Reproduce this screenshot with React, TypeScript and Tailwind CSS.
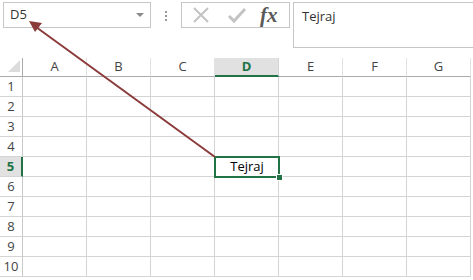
import React from 'react';

const cols = ['A', 'B', 'C', 'D', 'E', 'F', 'G'];
const rows = [1, 2, 3, 4, 5, 6, 7, 8, 9, 10];

export default function App() {
  return (
    <div className="relative w-[473px] h-[280px] overflow-hidden bg-white font-['Open_Sans',sans-serif] text-[12px]">
      {/* formula bar area */}
      <div className="flex items-start h-[58px] pt-[2px] pl-[3px]">
        <div className="flex items-center justify-between w-[148px] h-[26px] border border-[#c6c6c6] pl-[6px] pr-[6px]">
          <span className="text-[13px] text-[#333]">D5</span>
          <span className="w-0 h-0 border-l-[4px] border-r-[4px] border-t-[4px] border-l-transparent border-r-transparent border-t-[#8a8a8a]" />
        </div>
        <div className="flex flex-col gap-[2px] ml-[14px] mt-[9px]">
          <span className="w-[2px] h-[2px] bg-[#9a9a9a]" />
          <span className="w-[2px] h-[2px] bg-[#9a9a9a]" />
          <span className="w-[2px] h-[2px] bg-[#9a9a9a]" />
        </div>
        <div className="flex items-center ml-[14px] w-[109px] h-[26px] border border-[#c6c6c6]">
          <svg width="18" height="18" viewBox="0 0 18 18" className="ml-[10px]">
            <path d="M2 2 L16 16 M16 2 L2 16" stroke="#c3c3c3" strokeWidth="2" fill="none" />
          </svg>
          <svg width="20" height="18" viewBox="0 0 20 18" className="ml-[17px]">
            <path d="M2 10 L7 15 L18 3" stroke="#c3c3c3" strokeWidth="3" fill="none" />
          </svg>
          <span className="ml-[13px] font-['Liberation_Serif',serif] italic font-bold text-[21px] leading-none text-[#5a5a5a]">
            fx
          </span>
        </div>
        <div className="ml-[3px] flex-1 h-[46px] border border-r-0 border-[#c6c6c6] pl-[8px] pt-[4px]">
          <span className="text-[13px] text-[#333]">Tejraj</span>
        </div>
      </div>

      {/* sheet */}
      <div className="grid grid-cols-[23px_repeat(7,64px)] grid-rows-[19px_repeat(10,20px)]">
        <div className="relative border-r border-b border-[#ababab]">
          <span className="absolute left-[8px] bottom-[4px] w-0 h-0 [border-bottom:12px_solid_#dcdcdc] [border-left:12px_solid_transparent]" />
        </div>
        {cols.map((c) =>
          c === 'D' ? (
            <div
              key={c}
              className="flex items-center justify-center bg-[#e1e1e1] border-r border-[#d4d4d4] border-b-2 border-b-[#217346] font-bold text-[13px] text-[#217346]"
            >
              {c}
            </div>
          ) : (
            <div
              key={c}
              className="flex items-center justify-center border-r border-b border-r-[#e2e2e2] border-b-[#ababab] text-[13px] text-[#444]"
            >
              {c}
            </div>
          )
        )}
        {rows.map((r) => (
          <React.Fragment key={r}>
            {r === 5 ? (
              <div className="flex items-center justify-center bg-[#e1e1e1] border-r-2 border-r-[#217346] border-b border-b-[#d4d4d4] font-bold text-[13px] text-[#217346]">
                {r}
              </div>
            ) : (
              <div className="flex items-center justify-center border-r border-b border-r-[#c8c8c8] border-b-[#d4d4d4] text-[13px] text-[#444]">
                {r}
              </div>
            )}
            {cols.map((c) => (
              <div key={c} className="relative border-r border-b border-[#d4d4d4]">
                {r === 5 && c === 'D' && (
                  <div className="absolute z-10 -left-[1px] -top-[1px] w-[66px] h-[22px] border-2 border-[#217346] flex items-center justify-center text-[13px] text-black">
                    Tejraj
                    <span className="absolute -right-[5px] -bottom-[5px] w-[7px] h-[7px] bg-[#217346] border border-white" />
                  </div>
                )}
              </div>
            ))}
          </React.Fragment>
        ))}
      </div>

      {/* annotation arrow */}
      <svg className="absolute left-0 top-0 z-20 pointer-events-none" width="473" height="280" viewBox="0 0 473 280">
        <line x1="215" y1="157" x2="36" y2="27" stroke="#8b3a3a" strokeWidth="2" />
        <path d="M29 21 L42 23 L35 32 Z" fill="#8b3a3a" />
      </svg>
    </div>
  );
}
